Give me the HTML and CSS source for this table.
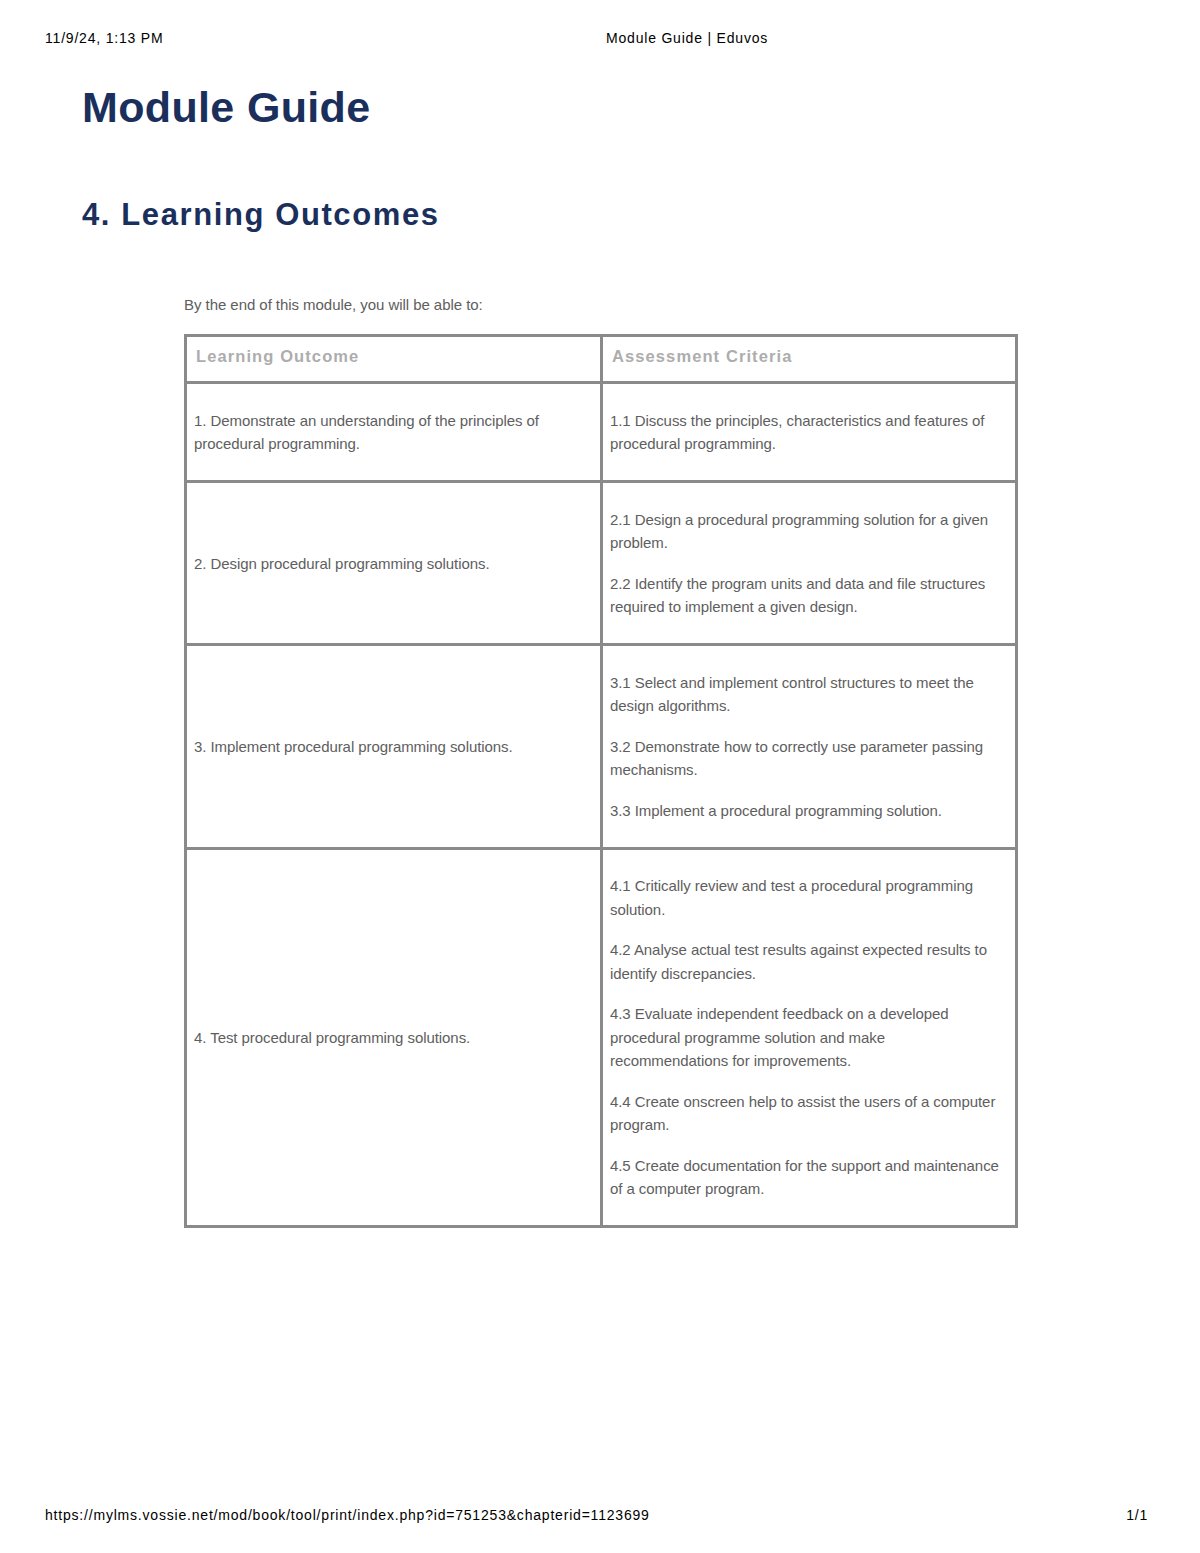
FILE: index.html
```html
<!DOCTYPE html>
<html lang="en">
<head>
<meta charset="utf-8">
<title>Module Guide | Eduvos</title>
<link rel="stylesheet" href="styles.css">
</head>
<body>
<div class="page">
  <header class="print-head">
    <span class="ph-date">11/9/24, 1:13 PM</span>
    <span class="ph-title">Module Guide | Eduvos</span>
  </header>

  <main class="content">
    <h1 class="title">Module Guide</h1>
    <h2 class="chapter">4. Learning Outcomes</h2>

    <div class="body">
      <p class="intro">By the end of this module, you will be able to:</p>

      <table class="outcomes">
        <colgroup><col class="c1"><col class="c2"></colgroup>
        <thead>
          <tr><th>Learning Outcome</th><th>Assessment Criteria</th></tr>
        </thead>
        <tbody>
          <tr>
            <td><p>1. Demonstrate an understanding of the principles of procedural programming.</p></td>
            <td><p>1.1 Discuss the principles, characteristics and features of procedural programming.</p></td>
          </tr>
          <tr>
            <td><p>2. Design procedural programming solutions.</p></td>
            <td>
              <p>2.1 Design a procedural programming solution for a given problem.</p>
              <p>2.2 Identify the program units and data and file structures required to implement a given design.</p>
            </td>
          </tr>
          <tr>
            <td><p>3. Implement procedural programming solutions.</p></td>
            <td>
              <p>3.1 Select and implement control structures to meet the design algorithms.</p>
              <p>3.2 Demonstrate how to correctly use parameter passing mechanisms.</p>
              <p>3.3 Implement a procedural programming solution.</p>
            </td>
          </tr>
          <tr>
            <td><p>4. Test procedural programming solutions.</p></td>
            <td>
              <p>4.1 Critically review and test a procedural programming solution.</p>
              <p>4.2 Analyse actual test results against expected results to identify discrepancies.</p>
              <p>4.3 Evaluate independent feedback on a developed procedural programme solution and make recommendations for improvements.</p>
              <p>4.4 Create onscreen help to assist the users of a computer program.</p>
              <p>4.5 Create documentation for the support and maintenance of a computer program.</p>
            </td>
          </tr>
        </tbody>
      </table>
    </div>
  </main>

  <footer class="print-foot">
    <span class="pf-url">https://mylms.vossie.net/mod/book/tool/print/index.php?id=751253&amp;chapterid=1123699</span>
    <span class="pf-page">1/1</span>
  </footer>
</div>
</body>
</html>
```

FILE: styles.css
```css
* { box-sizing: border-box; }

html, body {
  margin: 0;
  padding: 0;
  background: #ffffff;
}

body {
  font-family: "Liberation Sans", Arial, sans-serif;
  color: #000;
}

.page {
  width: 1200px;
  min-height: 1553px;
  display: flex;
  flex-direction: column;
}

.print-head {
  display: flex;
  padding: 30px 0 0 45px;
  font-size: 14px;
  line-height: 16px;
  letter-spacing: 0.8px;
}

.ph-date {
  width: 561px;
  flex: none;
}

.print-foot {
  margin-top: auto;
  display: flex;
  justify-content: space-between;
  padding: 0 52px 30px 45px;
  font-size: 14px;
  line-height: 16px;
  letter-spacing: 0.8px;
}

.content {
  padding-left: 82px;
}

.title {
  margin: 36px 0 0 0;
  font-size: 43px;
  line-height: 1.2;
  font-weight: 700;
  color: #1a2f5c;
  letter-spacing: 0.35px;
}

.chapter {
  margin: 62px 0 0 0;
  font-size: 31px;
  line-height: 1.2;
  font-weight: 700;
  color: #1a2f5c;
  letter-spacing: 1.6px;
}

.body {
  padding-left: 102px;
}

.intro {
  margin: 60px 0 18px 0;
  font-size: 15px;
  line-height: 23.5px;
  color: #5e5e5e;
  letter-spacing: -0.05px;
}

.outcomes {
  width: 831px;
  border-collapse: collapse;
  table-layout: fixed;
  border: 3px solid #8a8a8a;
}

.outcomes .c1 { width: 416px; }
.outcomes .c2 { width: 415px; }

.outcomes th,
.outcomes td {
  border: 3px solid #8a8a8a;
  text-align: left;
}

.outcomes th {
  padding: 7px 8px 12px 9px;
  font-size: 16.5px;
  line-height: 25px;
  font-weight: 700;
  color: #adadad;
  letter-spacing: 1.1px;
}

.outcomes td {
  padding: 8.5px 12px 8.5px 7px;
  vertical-align: middle;
  font-size: 15px;
  line-height: 23.5px;
  color: #5e5e5e;
  letter-spacing: -0.07px;
}

.outcomes td p {
  margin: 16px 0;
}

.outcomes td p + p {
  margin-top: 17px;
}
```
